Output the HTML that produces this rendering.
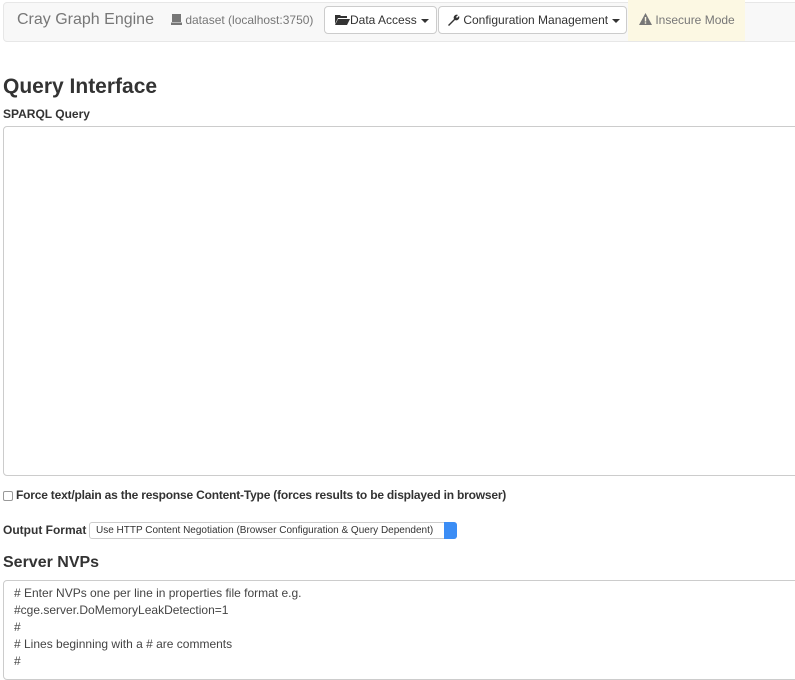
<!DOCTYPE html>
<html><head><meta charset="utf-8"><style>
body{margin:0;width:795px;height:668px;overflow:hidden;background:#fff;font-family:"Liberation Sans",sans-serif;color:#333;position:relative}
.nav{position:absolute;left:3px;top:2px;width:800px;height:38px;background:#f8f8f8;border:1px solid #e7e7e7;border-radius:4px}
.a{position:absolute;white-space:nowrap}
.btn{position:absolute;top:6px;height:28px;background:#fff;border:1px solid #ccc;border-radius:4px;font-size:12px;line-height:27px;box-sizing:border-box;padding-left:8px;color:#333;white-space:nowrap}
.caret{display:inline-block;border-top:4px solid #333;border-left:4px solid transparent;border-right:4px solid transparent;vertical-align:middle;margin-left:4px}
.ta{position:absolute;left:3px;width:800px;border:1px solid #ccc;border-radius:4px;box-sizing:border-box}
</style></head><body>
<div class="nav"></div>
<div class="a" style="left:17px;top:11px;font-size:16px;color:#777">Cray Graph Engine</div>
<div class="a" style="left:171px;top:13px;font-size:12px;color:#777"><svg width="11" height="11" viewBox="0 0 11 11" style="vertical-align:-1px"><rect x="1" y="0" width="9" height="8" fill="#777"/><rect x="0" y="8.5" width="11" height="2.5" fill="#777"/></svg> dataset (localhost:3750)</div>
<div class="btn" style="left:324px;width:113px;padding-left:10px"><svg width="15" height="11" viewBox="0 0 15 11" style="vertical-align:-1px"><path d="M0 1h5l1 1h6v2H3L0 10z M3 5h12l-3 6H0z" fill="#333"/></svg>Data Access<span class="caret"></span></div>
<div class="btn" style="left:438px;width:189px"><svg width="13" height="13" viewBox="0 0 13 13" style="vertical-align:-2px"><path d="M1 12l6-6a3 3 0 0 1 4-4l-2 2 1 1 2-2a3 3 0 0 1-4 4l-6 6z" fill="#333"/></svg> Configuration Management<span class="caret"></span></div>
<div class="a" style="left:628px;top:0;width:117px;height:41px;background:#fcf8e3"></div>
<div class="a" style="left:639px;top:13px;font-size:12px;color:#777"><svg width="13" height="12" viewBox="0 0 13 12" style="vertical-align:-1px"><path d="M6.5 0L13 12H0z" fill="#777"/><rect x="5.8" y="4" width="1.4" height="4.5" fill="#fcf8e3"/><rect x="5.8" y="9.3" width="1.4" height="1.4" fill="#fcf8e3"/></svg> Insecure Mode</div>
<div class="a" style="left:3px;top:75px;font-size:21px;font-weight:bold;color:#333">Query Interface</div>
<div class="a" style="left:3px;top:107px;font-size:12px;font-weight:bold">SPARQL Query</div>
<div class="ta" style="top:126px;height:350px"></div>
<div class="a" style="left:3px;top:491px;width:10px;height:10px;border:1px solid #999;border-radius:2px;box-sizing:border-box"></div>
<div class="a" style="left:16px;top:488px;font-size:12px;font-weight:bold;letter-spacing:-0.2px">Force text/plain as the response Content-Type (forces results to be displayed in browser)</div>
<div class="a" style="left:3px;top:523px;font-size:12px;font-weight:bold">Output Format</div>
<div class="a" style="left:89px;top:522px;width:368px;height:17px;border:1px solid #ccc;border-radius:3px;box-sizing:border-box;font-size:10px;line-height:15px;padding-left:6px">Use HTTP Content Negotiation (Browser Configuration &amp; Query Dependent)<div style="position:absolute;right:-1px;top:-1px;width:13px;height:17px;background:#3b8df5;border-radius:0 3px 3px 0"></div></div>
<div class="a" style="left:3px;top:554px;font-size:16px;font-weight:bold">Server NVPs</div>
<div class="ta" style="top:580px;height:100px;font-size:12px;line-height:17px;padding:4px 0 0 10px;color:#444">
# Enter NVPs one per line in properties file format e.g.<br>#cge.server.DoMemoryLeakDetection=1<br>#<br># Lines beginning with a # are comments<br>#</div>
</body></html>
